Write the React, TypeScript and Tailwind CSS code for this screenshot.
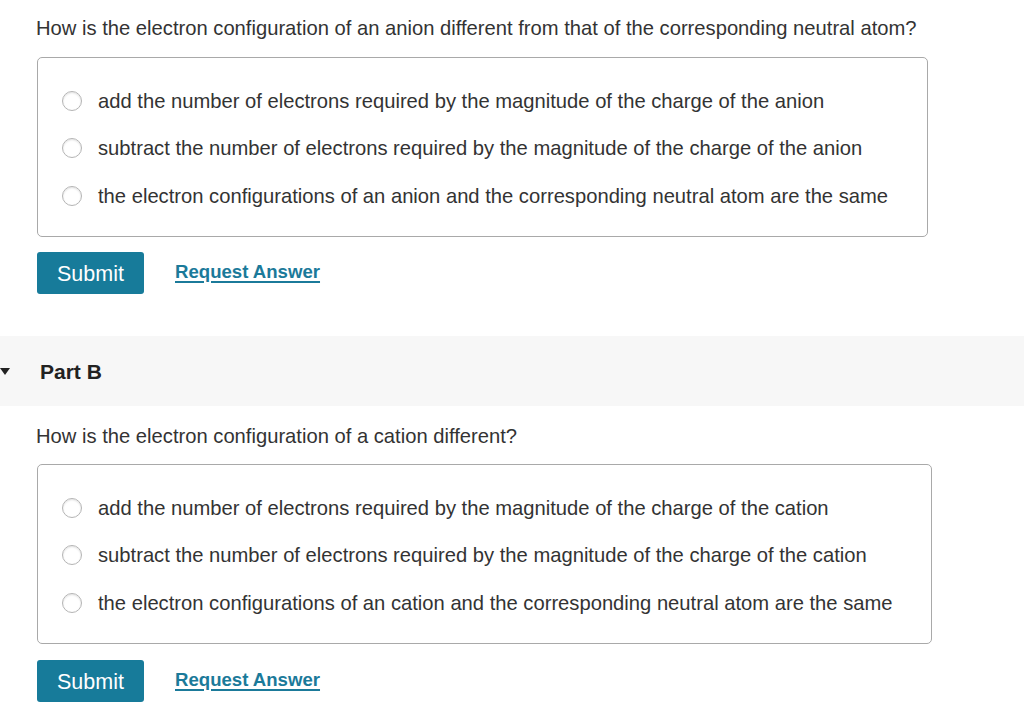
import React from "react";

const font = { fontFamily: '"Liberation Sans", Arial, Helvetica, sans-serif' };

function Radio() {
  return (
    <span className="inline-block w-[20px] h-[20px] rounded-full border border-[#b5b5b5] bg-white shadow-[inset_0_1px_2px_rgba(0,0,0,0.12)] shrink-0" />
  );
}

function Options({ items, width }: { items: string[]; width: string }) {
  return (
    <div className={`${width} h-[180px] border border-[#a9a9a9] rounded-[5px] pt-[19px] bg-white`}>
      {items.map((t) => (
        <div key={t} className="h-[47.5px] flex items-center pl-[24px]">
          <Radio />
          <span className="ml-[16px] text-[20.2px] leading-[24px] text-[#333] whitespace-nowrap">{t}</span>
        </div>
      ))}
    </div>
  );
}

function Actions() {
  return (
    <div className="flex items-center">
      <button className="w-[107px] h-[42px] rounded-[3px] bg-[#177b9a] text-white text-[21.5px] leading-none flex items-center justify-center pt-[3px]">
        Submit
      </button>
      <a className="ml-[31px] text-[18.6px] font-bold text-[#1b7a9a] underline underline-offset-[3px] decoration-[1.5px] cursor-pointer -mt-[2px]">
        Request Answer
      </a>
    </div>
  );
}

export default function App() {
  return (
    <div className="w-[1024px] h-[710px] bg-white overflow-hidden" style={font}>
      <div className="px-[36px]">
        <p className="pt-[16px] text-[20.2px] leading-[24px] text-[#333] whitespace-nowrap">
          How is the electron configuration of an anion different from that of the corresponding neutral atom?
        </p>
        <div className="mt-[17px] ml-[1px]">
          <Options
            width="w-[891px]"
            items={[
              "add the number of electrons required by the magnitude of the charge of the anion",
              "subtract the number of electrons required by the magnitude of the charge of the anion",
              "the electron configurations of an anion and the corresponding neutral atom are the same",
            ]}
          />
        </div>
        <div className="mt-[15px] ml-[1px]">
          <Actions />
        </div>
      </div>
      <div className="mt-[42px] h-[70px] bg-[#f7f7f7] flex items-center">
        <svg width="10" height="7" viewBox="0 0 10 7" className="shrink-0">
          <polygon points="0,0 10,0 5,7" fill="#222" />
        </svg>
        <span className="ml-[30px] text-[21px] font-bold text-[#222] leading-none">Part B</span>
      </div>
      <div className="px-[36px]">
        <p className="pt-[18px] text-[20.2px] leading-[24px] text-[#333]">
          How is the electron configuration of a cation different?
        </p>
        <div className="mt-[16px] ml-[1px]">
          <Options
            width="w-[895px]"
            items={[
              "add the number of electrons required by the magnitude of the charge of the cation",
              "subtract the number of electrons required by the magnitude of the charge of the cation",
              "the electron configurations of an cation and the corresponding neutral atom are the same",
            ]}
          />
        </div>
        <div className="mt-[16px] ml-[1px]">
          <Actions />
        </div>
      </div>
    </div>
  );
}
